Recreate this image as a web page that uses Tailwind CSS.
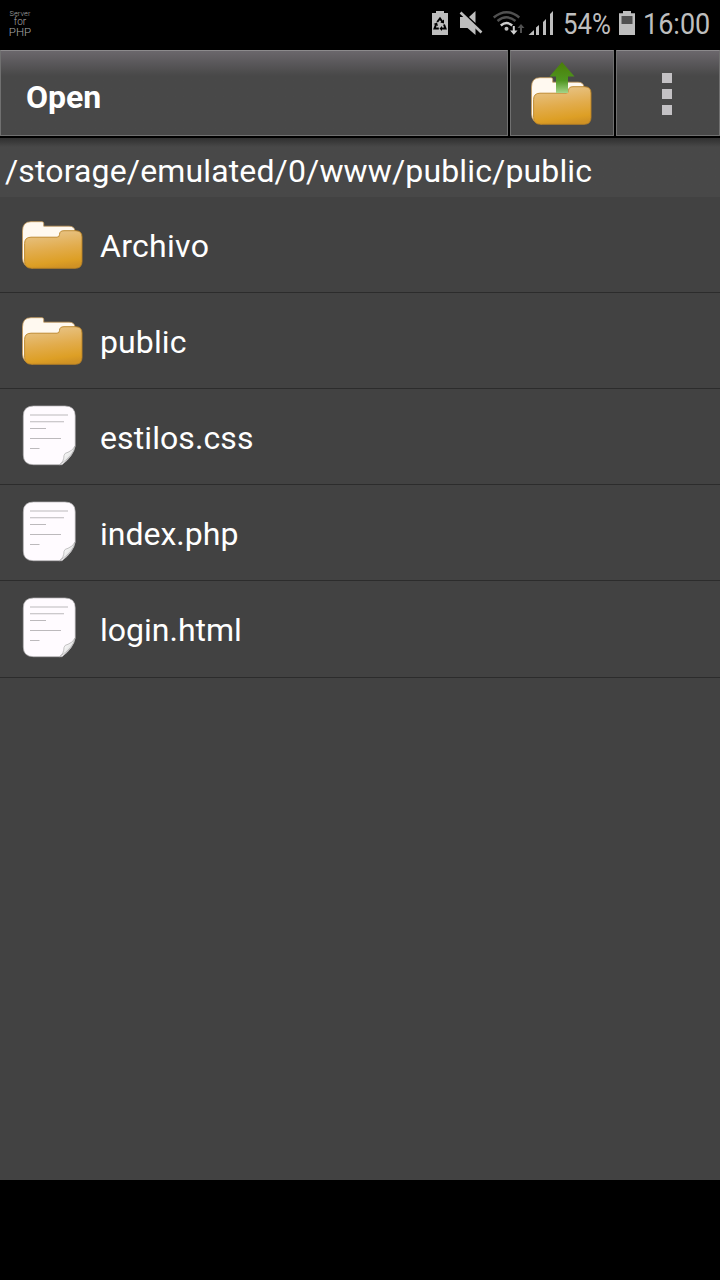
<!DOCTYPE html>
<html lang="en">
<head>
  <meta charset="UTF-8" />
  <meta name="viewport" content="width=device-width, initial-scale=1.0"/>
  <title>Open</title>
  <script src="https://cdn.jsdelivr.net/npm/@tailwindcss/browser@4"></script>
</head>
<body class="bg-black w-[720px] h-[1280px] overflow-hidden flex flex-col text-white font-['Roboto',sans-serif]">

  <!-- Shared icons -->
  <svg class="size-0 shrink-0">
    <defs>
      <linearGradient id="gold" x1="0.3" y1="0" x2="0.5" y2="1">
        <stop offset="0" stop-color="#e8c58a"/>
        <stop offset="0.5" stop-color="#e2ac4c"/>
        <stop offset="0.85" stop-color="#dd9f25"/>
        <stop offset="1" stop-color="#d09224"/>
      </linearGradient>
      <linearGradient id="green" x1="0" y1="0" x2="0" y2="1">
        <stop offset="0" stop-color="#4a7d08"/>
        <stop offset="0.6" stop-color="#4f9620"/>
        <stop offset="1" stop-color="#a4d488"/>
      </linearGradient>
      <linearGradient id="curl" x1="0" y1="0" x2="1" y2="1">
        <stop offset="0.3" stop-color="#ffffff"/>
        <stop offset="0.8" stop-color="#d4d4d4"/>
      </linearGradient>
    </defs>
    <symbol id="folder" viewBox="0 0 64 50">
      <path d="M1.500 11Q1.500 1.700 10 1.700H21Q22.700 1.700 22.700 3.200V6.200H48Q53.500 6.200 54 11V40H12V48Q1.500 47 1.500 38Z" fill="#fff9f0" stroke="#c79c5c" stroke-width="0.800"/>
      <path d="M3.600 23.500Q3.600 17.200 10 17.200H36Q38.500 17.200 38.500 14.500Q38.500 10.700 43 10.700H54.500Q61 10.700 61 17V41.500Q61 48.300 54 48.300H11Q3.600 48.300 3.600 41.500Z" fill="url(#gold)" stroke="#b98225" stroke-width="0.900"/>
    </symbol>
    <symbol id="file" viewBox="0 0 54 61">
      <path d="M11.500 1H43Q53.200 1 53.200 11V41Q51.500 51 40 59.700H11.500Q1.300 59.700 1.300 50V11Q1.300 1 11.500 1Z" fill="#fffbff" stroke="#b5b3b5" stroke-width="0.700"/>
      <path d="M53 41Q51.500 51 37.500 59.700Q42 56.500 42 50.500Q42.500 47.800 46 47.300Q51 45.500 53 41Z" fill="url(#curl)" stroke="#aaa" stroke-width="0.700"/>
      <path d="M8 10H46M8 16.800H42M8 23.500H24M8 33.500H39M8 43.500H17.500" stroke="#bcb9bc" stroke-width="1.100"/>
    </symbol>
  </svg>

  <!-- Status bar -->
  <div class="h-[50px] shrink-0 flex items-start justify-between pl-2 pr-[10px] text-[#bebebe]">
    <div class="pt-[10px] w-6 flex flex-col items-center text-[#aaa] font-light">
      <span class="text-[7.5px] leading-[7px]">Server</span>
      <span class="text-[10px] leading-[10px]">for</span>
      <span class="text-[11.5px] leading-[10px]">PHP</span>
    </div>
    <div class="flex h-[48px]">
      <svg class="w-[130px] h-[48px]" viewBox="428 0 130 48" fill="#bebebe">
        <!-- battery with recycle mark -->
        <path d="M436 11h8v2h4v22h-16V13h4z"/>
        <g fill="none" stroke="#000" stroke-width="2">
          <path d="M437.200 22L440 18.500L442.500 22"/>
          <path d="M444 24.500L445.500 28.500H441.500"/>
          <path d="M438.800 28.500H434.500L436 24.500"/>
        </g>
        <path d="M444 19.500v4l-3.700-1zM442 26v5l-2.500-2.500zM433.500 24l3.500-1.500 1 3.500z" fill="#000"/>
        <!-- muted speaker -->
        <path d="M469 17L475.500 11V23z"/>
        <path d="M460 17H466L475.500 26.500V35L467.500 28H460z"/>
        <path d="M460.500 12.500L481.500 32.500" stroke="#bebebe" stroke-width="2.600" fill="none"/>
        <!-- wifi -->
        <g fill="none" stroke-width="2.400">
          <path d="M493.700 17.500Q506.500 6.800 519.300 17.500M497.500 21Q506.500 13.700 515.500 21" stroke="#505050"/>
          <path d="M500.800 25.500Q506.500 20.500 512.200 25.500" stroke="#cecece"/>
        </g>
        <circle cx="506.500" cy="28.700" r="2"/>
        <path d="M512.800 26h2v4.500h2.700l-3.700 4.300-3.700-4.300h2.700z" fill="#d0d0d0"/>
        <path d="M520 33h2v-5h2.500l-3.500-4-3.500 4h2.500z" fill="#505050"/>
        <!-- signal -->
        <path d="M528.500 35L534 30V35zM536 35V27.500L539 25V35zM543 35V22L546 19V35zM550 35V14L553 11V35z"/>
      </svg>
      <div class="w-[53px] pl-[5px]"><span class="inline-block origin-left scale-x-[0.86] text-[30px] leading-[47px]">54%</span></div>
      <svg class="w-6 h-[48px] ml-[2px]" viewBox="613 0 24 48">
        <path d="M623 11h8v2.300h4V35h-16V13.300h4z" fill="#bebebe"/>
        <path d="M621.500 16h11v8h-11z" fill="#505050"/>
      </svg>
      <div class="w-[73px] pl-[6px]"><span class="inline-block origin-left scale-x-[0.9] text-[30px] leading-[47px]">16:00</span></div>
    </div>
  </div>

  <!-- Title bar -->
  <div class="h-[88px] shrink-0 flex gap-[2px] pb-[2px]">
    <div class="w-[508px] pl-[25px] flex items-center border border-[#707070] border-t-[#8c8a8c] bg-linear-to-b from-[#6b676c] to-[#484848] to-[25px]">
      <h1 class="text-[32px] leading-none font-bold pt-[8px]">Open</h1>
    </div>
    <button class="w-[104px] border border-[#707070] border-t-[#8c8a8c] bg-linear-to-b from-[#6b676c] to-[#484848] to-[25px] flex items-start pl-[19px] pt-[10px]">
      <svg class="w-16 h-[65px]" viewBox="0 0 64 65">
        <use href="#folder" y="15" width="64" height="50"/>
        <path d="M32 1L44.500 15.500H38V32H26V15.500H19.500Z" fill="url(#green)"/>
      </svg>
    </button>
    <button class="w-[104px] border border-[#707070] border-t-[#8c8a8c] bg-linear-to-b from-[#6b676c] to-[#484848] to-[25px] flex flex-col gap-[6px] pl-[45px] pt-[22px]">
      <span class="size-[10px] bg-[#c3c1c4]"></span>
      <span class="size-[10px] bg-[#c3c1c4]"></span>
      <span class="size-[10px] bg-[#c3c1c4]"></span>
    </button>
  </div>

  <!-- Current path -->
  <div class="h-[59px] shrink-0 pl-[5px] pt-[1px] bg-linear-to-b from-[#303030] to-[#484848] to-[9px] text-[32px] leading-[64px] tracking-[0.14px] whitespace-nowrap">/storage/emulated/0/www/public/public</div>

  <!-- File list -->
  <ul class="h-[983px] shrink-0 bg-[#424242] text-[32px]">
    <li class="h-24 flex border-b border-[#2c2c2c] pl-[21px]">
      <svg class="w-16 h-[50px] mt-[23px]"><use href="#folder"/></svg>
      <span class="pl-[15px] leading-[98px] tracking-[0.3px]">Archivo</span>
    </li>
    <li class="h-24 flex border-b border-[#2c2c2c] pl-[21px]">
      <svg class="w-16 h-[50px] mt-[23px]"><use href="#folder"/></svg>
      <span class="pl-[15px] leading-[98px] tracking-[0.1px]">public</span>
    </li>
    <li class="h-24 flex border-b border-[#2c2c2c] pl-[22px]">
      <svg class="w-[54px] h-[61px] mt-4"><use href="#file"/></svg>
      <span class="pl-6 leading-[98px] tracking-[0.1px]">estilos.css</span>
    </li>
    <li class="h-24 flex border-b border-[#2c2c2c] pl-[22px]">
      <svg class="w-[54px] h-[61px] mt-4"><use href="#file"/></svg>
      <span class="pl-6 leading-[98px]">index.php</span>
    </li>
    <li class="h-[97px] flex border-b border-[#2c2c2c] pl-[22px]">
      <svg class="w-[54px] h-[61px] mt-4"><use href="#file"/></svg>
      <span class="pl-6 leading-[98px]">login.html</span>
    </li>
  </ul>
</body>
</html>
